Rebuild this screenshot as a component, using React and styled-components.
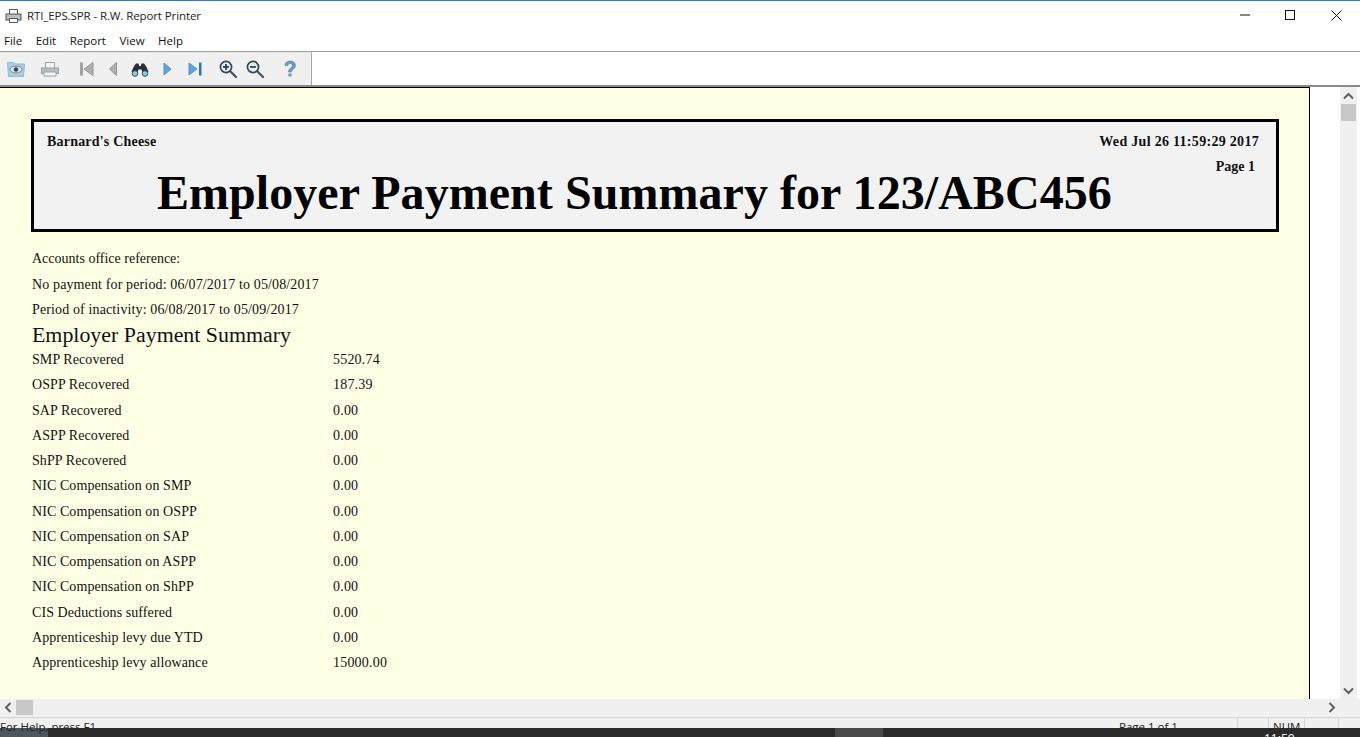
import { Fragment } from "react";
import styled, { createGlobalStyle } from "styled-components";

const GlobalStyle = createGlobalStyle`
  html, body { margin: 0; padding: 0; background: #fff; overflow: hidden; }
  body { font-family: "Open Sans", "Liberation Sans", sans-serif; }
`;

const Window = styled.div`
  width: 1360px;
  height: 737px;
  display: flex;
  flex-direction: column;
  overflow: hidden;
  background: #fff;
  border-top: 1px solid #2b7cc0;
  box-sizing: border-box;
  position: relative;
`;

const TitleBar = styled.div`
  height: 29px;
  display: flex;
  align-items: center;
  padding-left: 5px;
  font-size: 11.5px;
  color: #222;
`;

const TitleText = styled.span`
  margin-left: 5px;
  letter-spacing: -0.1px;
`;

const WinButtons = styled.div`
  margin-left: auto;
  display: flex;
  align-items: center;
  height: 100%;
  padding-right: 1px;
`;

const WinButton = styled.div`
  width: 46px;
  display: flex;
  justify-content: center;
  align-items: center;
  margin-top: -1px;
  margin-right: ${(p) => p.$overlap || 0}px;
`;

const MenuBar = styled.div`
  height: 21px;
  display: flex;
  align-items: center;
  padding-left: 4px;
  gap: 13.5px;
  font-size: 11.5px;
  color: #111;
  border-bottom: 1px solid #a0a0a0;
`;

const ToolbarRow = styled.div`
  height: 33px;
  display: flex;
  background: #fff;
  border-bottom: 2px solid #8a8a8a;
`;

const Toolbar = styled.div`
  width: 311px;
  background: #f0f0f0;
  border-right: 1px solid #a8a8a8;
  border-top: 1px solid #e4e4e4;
  display: flex;
  align-items: center;
`;

const ToolIcon = styled.svg`
  width: 20px;
  height: 20px;
  flex: none;
  margin-left: ${(p) => p.$gap}px;
`;

const Middle = styled.div`
  height: 612px;
  display: flex;
  background: #fff;
`;

const Canvas = styled.div`
  width: 1310px;
  height: 100%;
  box-sizing: border-box;
  background: #ffffe6;
  border-right: 1px solid #000;
  border-top: 1px solid #000;
  padding: 31px 0 0 31px;
  font-family: "Liberation Serif", serif;
  color: #111;
`;

const Gutter = styled.div`
  width: 30px;
`;

const VScroll = styled.div`
  width: 17px;
  background: #f0f0f0;
  display: flex;
  flex-direction: column;
  align-items: center;
  justify-content: space-between;
`;

const VThumb = styled.div`
  width: 15px;
  height: 17px;
  background: #c8c8c8;
`;

const ScrollArrow = styled.svg`
  display: block;
  width: 11px;
  height: 8px;
  margin: 5px auto 4px;
`;

const Corner = styled.div`
  width: 3px;
`;

const Banner = styled.div`
  width: 1248px;
  height: 113px;
  box-sizing: border-box;
  border: 3px solid #000;
  background: #f2f2f2;
  position: relative;
  margin-bottom: 19px;
`;

const Company = styled.div`
  position: absolute;
  left: 13px;
  top: 12px;
  font-size: 14px;
  font-weight: 700;
  letter-spacing: 0.2px;
`;

const Stamp = styled.div`
  position: absolute;
  right: 17px;
  top: 12px;
  font-size: 14px;
  font-weight: 700;
  letter-spacing: 0.3px;
`;

const PageNo = styled.div`
  position: absolute;
  right: 21px;
  top: 37px;
  font-size: 14px;
  font-weight: 700;
`;

const ReportTitle = styled.h1`
  margin: 0;
  padding: 43px 0 0 123px;
  font-size: 48px;
  line-height: 55px;
  font-weight: 700;
  letter-spacing: 0.05px;
  color: #000;
  white-space: nowrap;
`;

const BodyText = styled.div`
  padding-left: 1px;
`;

const InfoLine = styled.div`
  height: 25.5px;
  line-height: 16px;
  font-size: 14px;
  letter-spacing: ${(p) => (p.$tight ? 0 : 0.13)}px;
  white-space: nowrap;
`;

const SectionTitle = styled.div`
  font-size: 21.9px;
  line-height: 25px;
  height: 30.5px;
  margin-top: -6px;
  white-space: nowrap;
`;

const Rows = styled.div`
  display: grid;
  grid-template-columns: 301px auto;
  grid-auto-rows: 25.25px;
  justify-content: start;
  font-size: 14px;
  line-height: 16px;
`;

const RowLabel = styled.span`
  letter-spacing: 0.08px;
`;

const RowValue = styled.span`
  letter-spacing: 0.2px;
`;

const HScroll = styled.div`
  height: 17px;
  background: #f0f0f0;
  display: flex;
  align-items: center;
  padding: 0 24px 1px 4px;
`;

const HThumb = styled.div`
  width: 17px;
  height: 15px;
  background: #c8c8c8;
  margin-left: 4px;
  margin-right: auto;
`;

const HArrow = styled.svg`
  width: 8px;
  height: 11px;
  flex: none;
`;

const StatusBar = styled.div`
  height: 19px;
  background: #f0f0f0;
  border-top: 1px solid #d4d4d4;
  display: flex;
  font-size: 11.5px;
  color: #222;
  line-height: 16px;
`;

const StatusHelp = styled.div`
  width: 1118px;
  padding-top: 1px;
  white-space: nowrap;
`;

const StatusCell = styled.div`
  width: ${(p) => p.$w}px;
  box-sizing: border-box;
  padding: 1px 0 0 ${(p) => p.$pad}px;
  border-right: 1px solid #d4d4d4;
  white-space: nowrap;
`;

const Taskbar = styled.div`
  position: absolute;
  left: 0;
  right: 0;
  bottom: 0;
  height: 9px;
  display: flex;
  overflow: hidden;
  color: #fff;
  font-size: 12px;
`;

const TaskSegment = styled.div`
  width: ${(p) => p.$w}px;
  flex: ${(p) => (p.$w ? "none" : 1)};
  background: ${(p) => p.$bg};
`;

const Clock = styled.div`
  position: absolute;
  left: 1264px;
  top: 4px;
  line-height: 14px;
  font-size: 12px;
`;

const items = [
  ["SMP Recovered", "5520.74"],
  ["OSPP Recovered", "187.39"],
  ["SAP Recovered", "0.00"],
  ["ASPP Recovered", "0.00"],
  ["ShPP Recovered", "0.00"],
  ["NIC Compensation on SMP", "0.00"],
  ["NIC Compensation on OSPP", "0.00"],
  ["NIC Compensation on SAP", "0.00"],
  ["NIC Compensation on ASPP", "0.00"],
  ["NIC Compensation on ShPP", "0.00"],
  ["CIS Deductions suffered", "0.00"],
  ["Apprenticeship levy due YTD", "0.00"],
  ["Apprenticeship levy allowance", "15000.00"],
];

const Lens = ({ gap, plus }) => (
  <ToolIcon $gap={gap} viewBox="0 0 20 20">
    <path d="M12 12l6 6" stroke="#4a5560" strokeWidth="2.4" strokeLinecap="round" />
    <circle cx="8" cy="8" r="5.6" fill="#e6eef4" stroke="#2f4a5e" strokeWidth="1.7" />
    <path d="M5 8h6" stroke="#17324a" strokeWidth="1.6" />
    {plus && <path d="M8 5v6" stroke="#17324a" strokeWidth="1.6" />}
  </ToolIcon>
);

function App() {
  return (
    <Window>
      <GlobalStyle />
      <TitleBar>
        <svg width="17" height="16" viewBox="0 0 17 16">
          <path d="M4.5 6V1.5h8V6" fill="#fff" stroke="#555" />
          <rect x="1" y="6" width="15" height="6" fill="#b9bec2" stroke="#555" />
          <path d="M4.5 10.5h8v4h-8z" fill="#fff" stroke="#555" />
        </svg>
        <TitleText>RTI_EPS.SPR - R.W. Report Printer</TitleText>
        <WinButtons>
          <WinButton $overlap={-1}>
            <svg width="10" height="10" viewBox="0 0 10 10"><path d="M0 5h10" stroke="#111" /></svg>
          </WinButton>
          <WinButton>
            <svg width="10" height="10" viewBox="0 0 10 10"><rect x="0.5" y="0.5" width="9" height="9" fill="none" stroke="#111" /></svg>
          </WinButton>
          <WinButton>
            <svg width="11" height="11" viewBox="0 0 11 11"><path d="M0.5 0.5l10 10M10.5 0.5l-10 10" stroke="#111" /></svg>
          </WinButton>
        </WinButtons>
      </TitleBar>

      <MenuBar>
        <span>File</span>
        <span>Edit</span>
        <span>Report</span>
        <span>View</span>
        <span>Help</span>
      </MenuBar>

      <ToolbarRow>
        <Toolbar>
          <ToolIcon $gap={6} viewBox="0 0 20 20">
            <path d="M1.5 3.5h6l1.5 1.5h9.5l-1 12.5H2.5z" fill="#a6cde6" stroke="#8dbbd8" />
            <ellipse cx="10" cy="10.5" rx="6" ry="3.4" fill="#dfe4e6" stroke="#7d8a92" />
            <circle cx="10" cy="10.5" r="2.2" fill="#3d474e" />
          </ToolIcon>
          <ToolIcon $gap={14} viewBox="0 0 20 20">
            <path d="M5.5 9V3.5h9V9" fill="#f2f5f7" stroke="#98a2a9" />
            <rect x="1.5" y="9" width="17" height="5.5" fill="#b6bdc3" stroke="#98a2a9" />
            <path d="M4 13h12v4H4z" fill="#f4f6f8" stroke="#98a2a9" />
          </ToolIcon>
          <ToolIcon $gap={17} viewBox="0 0 20 20">
            <path d="M3 3.5h3v13H3z" fill="#a0a0a0" />
            <path d="M16 3.5v13L7 10z" fill="#b0b0b0" stroke="#949494" />
          </ToolIcon>
          <ToolIcon $gap={6} viewBox="0 0 20 20">
            <path d="M13.5 3.5v13L6.5 10z" fill="#b0b0b0" stroke="#949494" />
          </ToolIcon>
          <ToolIcon $gap={7} viewBox="0 0 20 20">
            <path d="M3.5 8l2.5-3.5h2.5l.7 2.5h1.6l.7-2.5H14L16.5 8l2 5h-6l-1-2.500h-3l-1 2.500h-6z" fill="#2a3036" />
            <circle cx="5" cy="14.500" r="2.800" fill="#8ccbec" stroke="#3c4a54" />
            <circle cx="15" cy="14.500" r="2.800" fill="#8ccbec" stroke="#3c4a54" />
          </ToolIcon>
          <ToolIcon $gap={8} viewBox="0 0 20 20">
            <path d="M6 4v12l7-6z" fill="#5ea6da" stroke="#4c92c6" />
          </ToolIcon>
          <ToolIcon $gap={7} viewBox="0 0 20 20">
            <path d="M4 4v12l8-6z" fill="#5ea6da" stroke="#4c92c6" />
            <path d="M14 3.500h2.500v13H14z" fill="#2f76ae" />
          </ToolIcon>
          <Lens gap={13} plus />
          <Lens gap={7} />
          <ToolIcon $gap={15} viewBox="0 0 20 20">
            <path d="M5 6.500C5 3.500 7.500 2 10.200 2 13 2 15.500 3.600 15.500 6.400c0 3.800-4 3.400-4 6.600H8.600c0-4.400 3.800-4 3.800-6.500 0-1.300-1-2-2.200-2-1.300 0-2.200.8-2.200 2z" fill="#6a9cc2" stroke="#4f80a6" strokeWidth="0.6" />
            <rect x="8.400" y="14.400" width="3.200" height="3.200" rx="0.6" fill="#6a9cc2" />
          </ToolIcon>
        </Toolbar>
      </ToolbarRow>

      <Middle>
        <Canvas>
          <Banner>
            <Company>Barnard's Cheese</Company>
            <Stamp>Wed Jul 26 11:59:29 2017</Stamp>
            <PageNo>Page 1</PageNo>
            <ReportTitle>Employer Payment Summary for 123/ABC456</ReportTitle>
          </Banner>
          <BodyText>
            <InfoLine $tight>Accounts office reference:</InfoLine>
            <InfoLine>No payment for period: 06/07/2017 to 05/08/2017</InfoLine>
            <InfoLine>Period of inactivity: 06/08/2017 to 05/09/2017</InfoLine>
            <SectionTitle>Employer Payment Summary</SectionTitle>
            <Rows>
              {items.map(([label, value]) => (
                <Fragment key={label}>
                  <RowLabel>{label}</RowLabel>
                  <RowValue>{value}</RowValue>
                </Fragment>
              ))}
            </Rows>
          </BodyText>
        </Canvas>
        <Gutter />
        <VScroll>
          <div>
            <ScrollArrow viewBox="0 0 11 8"><path d="M1 6.500l4.500-4.500 4.500 4.500" fill="none" stroke="#606060" strokeWidth="2" /></ScrollArrow>
            <VThumb />
          </div>
          <ScrollArrow viewBox="0 0 11 8"><path d="M1 1.500l4.500 4.500 4.500-4.500" fill="none" stroke="#606060" strokeWidth="2" /></ScrollArrow>
        </VScroll>
        <Corner />
      </Middle>

      <HScroll>
        <HArrow viewBox="0 0 8 11"><path d="M6.500 1L2 5.500 6.500 10" fill="none" stroke="#606060" strokeWidth="2" /></HArrow>
        <HThumb />
        <HArrow viewBox="0 0 8 11"><path d="M1.500 1L6 5.500 1.500 10" fill="none" stroke="#606060" strokeWidth="2" /></HArrow>
      </HScroll>

      <StatusBar>
        <StatusHelp>For Help, press F1</StatusHelp>
        <StatusCell $w={120} $pad={1}>Page 1 of 1</StatusCell>
        <StatusCell $w={31} $pad={0} />
        <StatusCell $w={36} $pad={4}>NUM</StatusCell>
        <StatusCell $w={34} $pad={0} />
      </StatusBar>

      <Taskbar>
        <TaskSegment $w={48} $bg="rgba(14, 26, 38, 0.72)" />
        <TaskSegment $w={787} $bg="#2b2b2b" />
        <TaskSegment $w={48} $bg="#4a4a4a" />
        <TaskSegment $bg="#2b2b2b" />
        <Clock>11:59</Clock>
      </Taskbar>
    </Window>
  );
}

export default App;
